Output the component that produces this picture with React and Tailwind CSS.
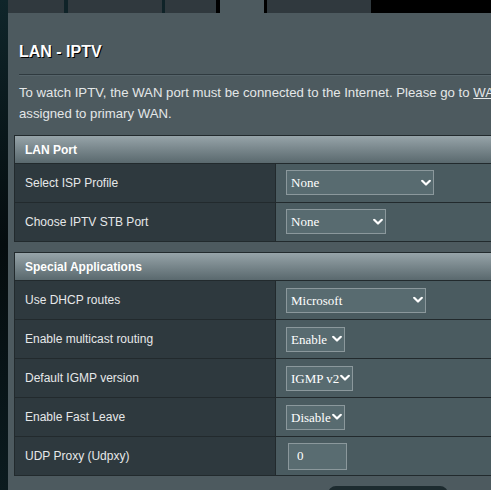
import React from "react";

const Chevron = () => (
  <svg
    className="pointer-events-none absolute right-[3px] top-1/2 -translate-y-1/2"
    width="10"
    height="7"
    viewBox="0 0 10 7"
  >
    <path d="M1.2 1.3 L5 5 L8.8 1.3" fill="none" stroke="#ffffff" strokeWidth="2.2" strokeLinecap="round" strokeLinejoin="round" />
  </svg>
);

const Select = ({ value, w, h = "h-[24px]" }) => (
  <div className={`relative ${w} ${h}`}>
    <select
      defaultValue={value}
      className={`appearance-none w-full h-full bg-[#586b70] border border-[#8b989c] text-white text-[13px] pl-[4px] pr-[12px] outline-none`}
      style={{ fontFamily: '"Liberation Serif", serif' }}
    >
      <option>{value}</option>
    </select>
    <Chevron />
  </div>
);

const Row = ({ label, children }) => (
  <div className="flex h-[39px] border-t border-[#222a2d]">
    <div className="w-[261px] bg-[#2e393e] flex items-center pl-[10px] text-[12px] text-[#e6e8e9] border-r border-[#222a2d]">
      {label}
    </div>
    <div className="flex-1 bg-[#4a5b60] flex items-center pl-[10px]">{children}</div>
  </div>
);

const Header = ({ title }) => (
  <div className="h-[27px] bg-gradient-to-b from-[#97a4a9] to-[#5a696e] flex items-center pl-[10px] text-[12px] font-bold text-white">
    {title}
  </div>
);

export default function App() {
  return (
    <div
      className="w-[491px] h-[490px] overflow-hidden flex bg-black"
      style={{ fontFamily: '"Liberation Sans", Arial, sans-serif' }}
    >
      <div className="w-[8px] shrink-0 h-full bg-gradient-to-b from-[#0f252a] via-[#050c0e] to-[#0b1b1f]" />
      <div className="flex flex-col w-[760px] shrink-0">
        <div className="flex h-[13px] shrink-0 bg-black">
          <div className="w-[56px] bg-[#30393e]" />
          <div className="w-[4px] bg-[#0f2328]" />
          <div className="w-[94px] bg-[#30393e]" />
          <div className="w-[3px] bg-[#0f2328]" />
          <div className="w-[51px] bg-[#30393e]" />
          <div className="w-[4px] bg-black" />
          <div className="w-[44px] bg-[#4d5a5f]" />
          <div className="w-[3px] bg-black" />
          <div className="w-[104px] bg-[#30393e]" />
        </div>
        <div className="flex-1 bg-[#4d5a5f] pt-[29px]">
          <div className="pl-[11px]">
            <div className="text-[16px] leading-[20px] font-bold text-white [text-shadow:1px_1px_0px_#000]">
              LAN - IPTV
            </div>
            <div className="mt-[12px] h-[2px] border-t border-[#2f3a3f] border-b border-b-[#56646a]" />
            <div className="mt-[6px] text-[13.2px] leading-[21px] text-[#e4e7e8] whitespace-nowrap">
              To watch IPTV, the WAN port must be connected to the Internet. Please go to{" "}
              <span className="underline">WAN - Internet Connection</span> and make sure the WAN port is
              <br />
              assigned to primary WAN.
            </div>
          </div>
          <div className="ml-[6px] w-[748px] mt-[11px]">
            <div className="border border-[#222a2d]">
              <Header title="LAN Port" />
              <Row label="Select ISP Profile">
                <div className="-mt-[1px]">
                  <Select value="None" w="w-[148px]" h="h-[25px]" />
                </div>
              </Row>
              <Row label="Choose IPTV STB Port">
                <div className="-mt-[1px]">
                  <Select value="None" w="w-[100px]" h="h-[25px]" />
                </div>
              </Row>
            </div>
            <div className="border border-[#222a2d] mt-[10px]">
              <Header title="Special Applications" />
              <Row label="Use DHCP routes">
                <Select value="Microsoft" w="w-[140px]" h="h-[25px]" />
              </Row>
              <Row label="Enable multicast routing">
                <Select value="Enable" w="w-[59px]" h="h-[25px]" />
              </Row>
              <Row label="Default IGMP version">
                <Select value="IGMP v2" w="w-[67px]" h="h-[25px]" />
              </Row>
              <Row label="Enable Fast Leave">
                <Select value="Disable" w="w-[59px]" h="h-[25px]" />
              </Row>
              <Row label="UDP Proxy (Udpxy)">
                <input
                  defaultValue="0"
                  className="ml-[2px] w-[59px] h-[27px] bg-[#596c71] border border-[#8b989c] text-white text-[13px] pl-[8px] outline-none"
                  style={{ fontFamily: '"Liberation Serif", serif' }}
                />
              </Row>
            </div>
            <div className="flex justify-center mt-[10px]">
              <button className="w-[120px] h-[30px] rounded-[8px] bg-[#1d2b2f] text-white text-[13px]">
                Apply
              </button>
            </div>
          </div>
        </div>
      </div>
    </div>
  );
}
